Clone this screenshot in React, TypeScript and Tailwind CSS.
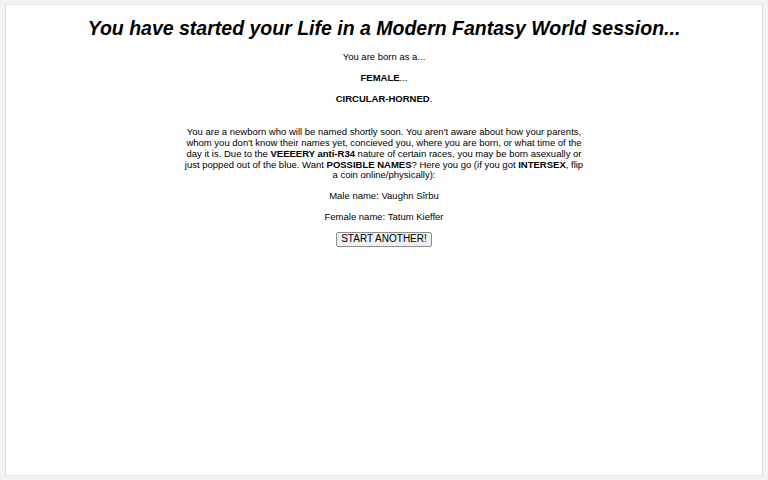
import React from "react";

const names = { male: "Vaughn Sîrbu", female: "Tatum Kieffer" };

export default function App() {
  return (
    <div className="min-h-screen bg-[#f3f3f3] px-[5px] py-[4px] font-['Liberation_Sans',Arial,sans-serif] text-black">
      <div className="flex h-[472px] flex-col items-center border border-[#e2e2e2] bg-white text-center text-[9.5px] leading-[10.75px]">
        <h1 className="mt-[12px] text-[19.5px] font-bold italic leading-[23px]">
          You have started your Life in a Modern Fantasy World session...
        </h1>
        <p className="mt-[12px]">You are born as a...</p>
        <p className="mt-[10px]">
          <b>FEMALE</b>...
        </p>
        <p className="mt-[10px]">
          <b>CIRCULAR-HORNED</b>.
        </p>
        <p className="mt-[23px] w-[404px]">
          You are a newborn who will be named shortly soon. You aren't aware about how your parents,
          whom you don't know their names yet, concieved you, where you are born, or what time of the
          day it is. Due to the <b>VEEEERY anti-R34</b> nature of certain races, you may be born
          asexually or just popped out of the blue. Want <b>POSSIBLE NAMES</b>? Here you go (if you
          got <b>INTERSEX</b>, flip a coin online/physically):
        </p>
        <p className="mt-[10px]">Male name: {names.male}</p>
        <p className="mt-[10px]">Female name: {names.female}</p>
        <button className="mt-[9px] h-[15px] rounded-[2px] border border-[#8f8f8f] bg-[#efefef] px-[4px] text-[10px] leading-[12px]">
          START ANOTHER!
        </button>
      </div>
    </div>
  );
}
